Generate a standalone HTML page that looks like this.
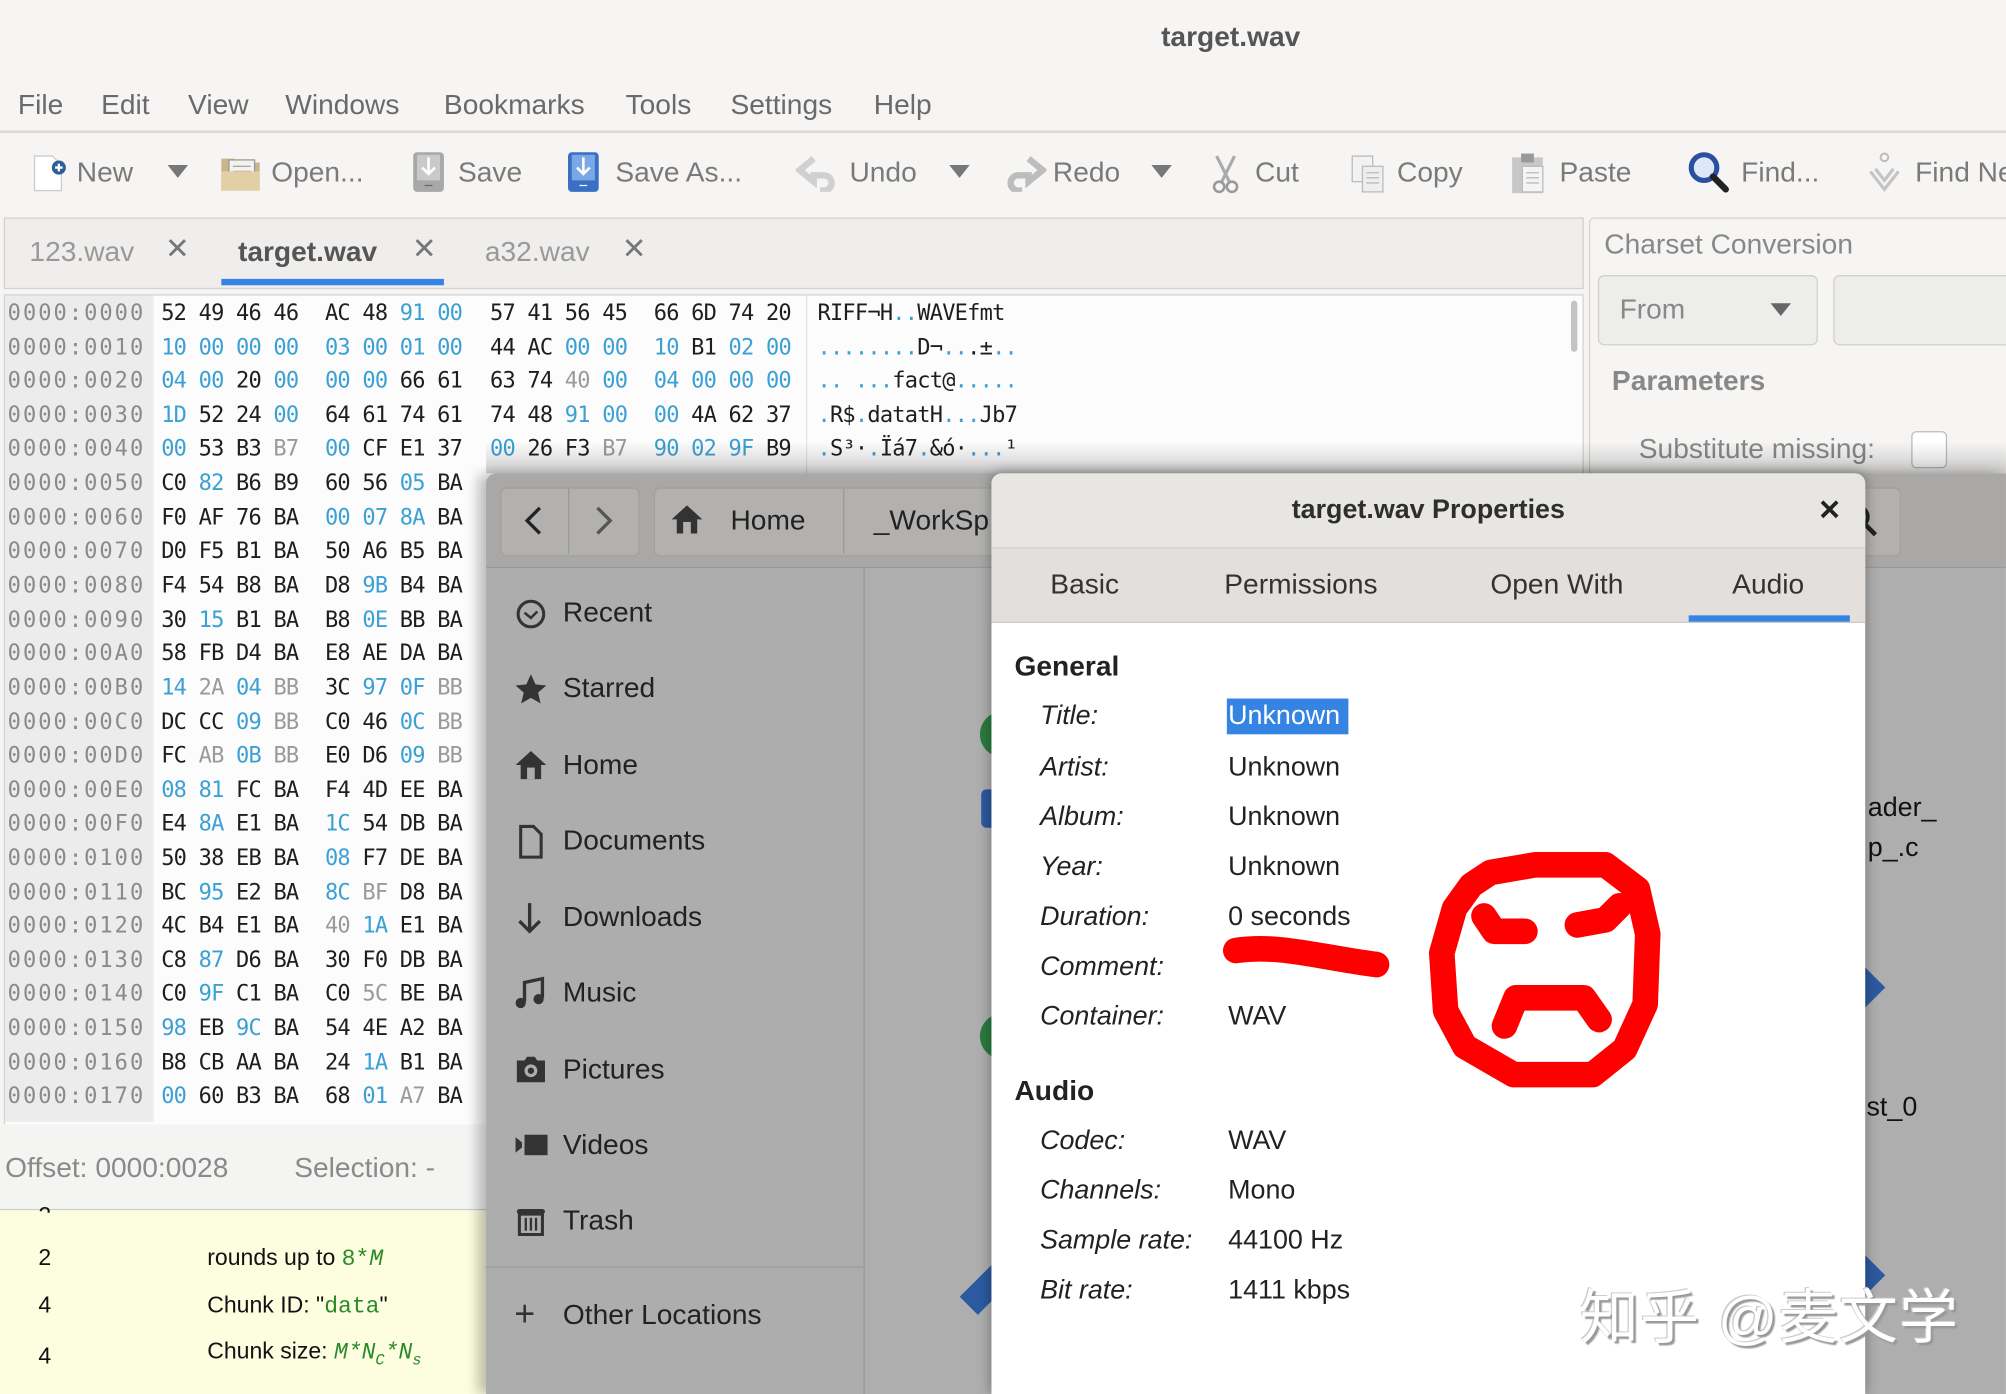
<!DOCTYPE html>
<html><head><meta charset="utf-8">
<style>
html,body{margin:0;padding:0;width:2006px;height:1394px;overflow:hidden;background:#f6f5f4}
#w{position:absolute;left:0;top:0;width:1568px;height:1090px;transform:scale(1.2793);transform-origin:0 0;font-family:"Liberation Sans",sans-serif;overflow:hidden}
.a{position:absolute;white-space:nowrap}
.n{font-family:"Liberation Sans Narrow","Liberation Sans",sans-serif}
.mi{font-size:22px;color:#6a6a6a;top:69px}
.tb{font-size:22px;color:#7a7a7a;top:122px}
.r{position:absolute;left:0;height:26px;font-family:"DejaVu Sans Mono","Liberation Mono",monospace;font-size:17.2px;color:#1e1e1e;line-height:26px}
.r .o{position:absolute;left:6px;color:#8a8a8a;letter-spacing:1.6px}
.r .g{position:absolute;white-space:pre;letter-spacing:-0.6px}
.b{color:#3ba0d4}
.y{color:#9a9a9a}
.sb{font-size:22px;color:#222;left:440px}
.sbi{position:absolute;left:402px}
.lb{font-size:21px;color:#222;font-style:italic;left:813px}
.vl{font-size:21px;color:#222;left:960px}
</style></head><body><div id="w">

<div class="a n" style="left:0;width:1924px;text-align:center;top:16px;font-size:22px;font-weight:bold;color:#555">target.wav</div>
<div class="a n mi" style="left:14px">File</div>
<div class="a n mi" style="left:79px">Edit</div>
<div class="a n mi" style="left:147px">View</div>
<div class="a n mi" style="left:223px">Windows</div>
<div class="a n mi" style="left:347px">Bookmarks</div>
<div class="a n mi" style="left:489px">Tools</div>
<div class="a n mi" style="left:571px">Settings</div>
<div class="a n mi" style="left:683px">Help</div>
<div class="a" style="left:0;top:102px;width:1568px;height:2px;background:#dcdad7"></div>

<svg class="a" style="left:24px;top:119px" width="30" height="32"><path d="M3 3h14l7 7v20H3z" fill="#fff" stroke="#ccc"/><circle cx="22" cy="12" r="5.5" fill="#2e5d9a"/><path d="M22 9v6M19 12h6" stroke="#fff" stroke-width="1.8"/></svg>
<div class="a n tb" style="left:60px">New</div>
<div class="a" style="left:131px;top:129px;width:0;height:0;border-left:8px solid transparent;border-right:8px solid transparent;border-top:10px solid #777"></div>
<svg class="a" style="left:171px;top:118px" width="36" height="34"><path d="M2 6h10l3 3h17v22H2z" fill="#cbb48a"/><rect x="8" y="7" width="20" height="18" fill="#f4f2ee" stroke="#999"/><path d="M11 12h14M11 16h14M11 20h10" stroke="#aaa"/><path d="M2 16h30v15H2z" fill="#e2cfa6"/></svg>
<div class="a n tb" style="left:212px">Open...</div>
<svg class="a" style="left:321px;top:117px" width="28" height="35"><rect x="2" y="2" width="24" height="31" rx="3" fill="#a8a8a8"/><rect x="5" y="4" width="18" height="20" fill="#c9c9c9"/><path d="M14 6v13M9 14l5 5 5-5" stroke="#fff" stroke-width="2" fill="none"/><path d="M11 28h6" stroke="#666"/></svg>
<div class="a n tb" style="left:358px">Save</div>
<svg class="a" style="left:442px;top:117px" width="28" height="35"><rect x="2" y="2" width="24" height="31" rx="3" fill="#3a6fc4"/><rect x="5" y="4" width="18" height="20" fill="#7aa7e6"/><path d="M14 6v13M9 14l5 5 5-5" stroke="#fff" stroke-width="2" fill="none"/><path d="M11 28h6" stroke="#fff"/></svg>
<div class="a n tb" style="left:481px">Save As...</div>
<svg class="a" style="left:622px;top:120px" width="36" height="30"><path d="M14 4L3 13l11 9v-5h8a6 6 0 0 1 0 12h-3" stroke="#d0d0d0" stroke-width="5" fill="none"/></svg>
<div class="a n tb" style="left:664px">Undo</div>
<div class="a" style="left:742px;top:129px;border-left:8px solid transparent;border-right:8px solid transparent;border-top:10px solid #777"></div>
<svg class="a" style="left:782px;top:120px" width="36" height="30"><path d="M22 4l11 9-11 9v-5h-8a6 6 0 0 0 0 12h3" stroke="#bdbdbd" stroke-width="5" fill="none"/></svg>
<div class="a n tb" style="left:823px">Redo</div>
<div class="a" style="left:900px;top:129px;border-left:8px solid transparent;border-right:8px solid transparent;border-top:10px solid #777"></div>
<svg class="a" style="left:945px;top:120px" width="26" height="32"><path d="M6 2l10 20M20 2L10 22" stroke="#aaa" stroke-width="2.5"/><circle cx="8" cy="26" r="4" fill="none" stroke="#999" stroke-width="2"/><circle cx="18" cy="26" r="4" fill="none" stroke="#999" stroke-width="2"/></svg>
<div class="a n tb" style="left:981px">Cut</div>
<svg class="a" style="left:1055px;top:120px" width="30" height="32"><rect x="2" y="2" width="16" height="20" fill="#f2f2f2" stroke="#bbb"/><rect x="10" y="10" width="16" height="20" fill="#eee" stroke="#bbb"/><path d="M13 15h10M13 19h10M13 23h10" stroke="#bbb"/></svg>
<div class="a n tb" style="left:1092px">Copy</div>
<svg class="a" style="left:1180px;top:118px" width="30" height="34"><rect x="2" y="5" width="24" height="28" fill="#c8c8c8"/><rect x="9" y="2" width="10" height="7" fill="#999"/><rect x="10" y="12" width="16" height="20" fill="#f4f4f4" stroke="#bbb"/><path d="M13 17h10M13 21h10M13 25h10" stroke="#bbb"/></svg>
<div class="a n tb" style="left:1219px">Paste</div>
<svg class="a" style="left:1318px;top:117px" width="36" height="36"><circle cx="14" cy="14" r="10" fill="#dde8f7" stroke="#2a4ea0" stroke-width="4"/><path d="M21 21l10 10" stroke="#222" stroke-width="5" stroke-linecap="round"/></svg>
<div class="a n tb" style="left:1361px">Find...</div>
<svg class="a" style="left:1458px;top:118px" width="32" height="34"><circle cx="15" cy="5" r="3" fill="none" stroke="#bbb" stroke-width="1.5"/><path d="M4 16l11 14 11-14M8 14l7 9 7-9" stroke="#c4c4c4" stroke-width="2.5" fill="none"/></svg>
<div class="a n tb" style="left:1497px">Find Ne</div>

<div class="a" style="left:3px;top:170px;width:1233px;height:54px;background:#efeeed;border:1px solid #d4d2cf"></div>
<div class="a n" style="left:23px;top:184px;font-size:22px;color:#999">123.wav</div>
<div class="a" style="left:129px;top:181px;font-size:23px;color:#777">✕</div>
<div class="a n" style="left:186px;top:184px;font-size:22px;color:#555;font-weight:bold">target.wav</div>
<div class="a" style="left:322px;top:181px;font-size:23px;color:#777">✕</div>
<div class="a" style="left:173px;top:218px;width:174px;height:5px;background:#3584e4"></div>
<div class="a n" style="left:379px;top:184px;font-size:22px;color:#999">a32.wav</div>
<div class="a" style="left:486px;top:181px;font-size:23px;color:#777">✕</div>

<div class="a" style="left:3px;top:230px;width:1233px;height:648px;background:#fcfcfc;border:1px solid #d4d2cf"></div>
<div class="a" style="left:4px;top:231px;width:116px;height:646px;background:#ececec"></div>
<div class="a" style="left:630px;top:231px;width:1px;height:646px;background:#e5e5e5"></div>
<div class="a" style="left:1228px;top:235px;width:5px;height:40px;background:#c4c4c4;border-radius:3px"></div>

<div class="r" style="top:232px"><span class="o">0000:0000</span><span class="g" style="left:126px">52 49 46 46</span><span class="g" style="left:254px">AC 48 <span class="b">91 00</span></span><span class="g" style="left:383px">57 41 56 45</span><span class="g" style="left:511px">66 6D 74 20</span><span class="g" style="left:639px">RIFF¬H<span class="b">..</span>WAVEfmt</span></div>
<div class="r" style="top:259px"><span class="o">0000:0010</span><span class="g b" style="left:126px">10 00 00 00</span><span class="g b" style="left:254px">03 00 01 00</span><span class="g" style="left:383px">44 AC <span class="b">00 00</span></span><span class="g" style="left:511px"><span class="b">10</span> B1 <span class="b">02 00</span></span><span class="g" style="left:639px"><span class="b">........</span>D¬<span class="b">..</span>.±<span class="b">..</span></span></div>
<div class="r" style="top:285px"><span class="o">0000:0020</span><span class="g" style="left:126px"><span class="b">04 00</span> 20 <span class="b">00</span></span><span class="g" style="left:254px"><span class="b">00 00</span> 66 61</span><span class="g" style="left:383px">63 74 <span class="y">40</span> <span class="b">00</span></span><span class="g b" style="left:511px">04 00 00 00</span><span class="g" style="left:639px"><span class="b">..</span> <span class="b">...</span>fact@<span class="b">.....</span></span></div>
<div class="r" style="top:312px"><span class="o">0000:0030</span><span class="g" style="left:126px"><span class="b">1D</span> 52 24 <span class="b">00</span></span><span class="g" style="left:254px">64 61 74 61</span><span class="g" style="left:383px">74 48 <span class="b">91 00</span></span><span class="g" style="left:511px"><span class="b">00</span> 4A 62 37</span><span class="g" style="left:639px"><span class="b">.</span>R$<span class="b">.</span>datatH<span class="b">...</span>Jb7</span></div>
<div class="r" style="top:338px"><span class="o">0000:0040</span><span class="g" style="left:126px"><span class="b">00</span> 53 B3 <span class="y">B7</span></span><span class="g" style="left:254px"><span class="b">00</span> CF E1 37</span><span class="g" style="left:383px"><span class="b">00</span> 26 F3 <span class="y">B7</span></span><span class="g" style="left:511px"><span class="b">90 02 9F</span> B9</span><span class="g" style="left:639px"><span class="b">.</span>S³·<span class="b">.</span>Ïá7<span class="b">.</span>&amp;ó·<span class="b">...</span>¹</span></div>
<div class="r" style="top:365px"><span class="o">0000:0050</span><span class="g" style="left:126px">C0 <span class="b">82</span> B6 B9</span><span class="g" style="left:254px">60 56 <span class="b">05</span> BA</span></div>
<div class="r" style="top:392px"><span class="o">0000:0060</span><span class="g" style="left:126px">F0 AF 76 BA</span><span class="g" style="left:254px"><span class="b">00 07 8A</span> BA</span></div>
<div class="r" style="top:418px"><span class="o">0000:0070</span><span class="g" style="left:126px">D0 F5 B1 BA</span><span class="g" style="left:254px">50 A6 B5 BA</span></div>
<div class="r" style="top:445px"><span class="o">0000:0080</span><span class="g" style="left:126px">F4 54 B8 BA</span><span class="g" style="left:254px">D8 <span class="b">9B</span> B4 BA</span></div>
<div class="r" style="top:472px"><span class="o">0000:0090</span><span class="g" style="left:126px">30 <span class="b">15</span> B1 BA</span><span class="g" style="left:254px">B8 <span class="b">0E</span> BB BA</span></div>
<div class="r" style="top:498px"><span class="o">0000:00A0</span><span class="g" style="left:126px">58 FB D4 BA</span><span class="g" style="left:254px">E8 AE DA BA</span></div>
<div class="r" style="top:525px"><span class="o">0000:00B0</span><span class="g" style="left:126px"><span class="b">14</span> <span class="y">2A</span> <span class="b">04</span> <span class="y">BB</span></span><span class="g" style="left:254px">3C <span class="b">97 0F</span> <span class="y">BB</span></span></div>
<div class="r" style="top:552px"><span class="o">0000:00C0</span><span class="g" style="left:126px">DC CC <span class="b">09</span> <span class="y">BB</span></span><span class="g" style="left:254px">C0 46 <span class="b">0C</span> <span class="y">BB</span></span></div>
<div class="r" style="top:578px"><span class="o">0000:00D0</span><span class="g" style="left:126px">FC <span class="y">AB</span> <span class="b">0B</span> <span class="y">BB</span></span><span class="g" style="left:254px">E0 D6 <span class="b">09</span> <span class="y">BB</span></span></div>
<div class="r" style="top:605px"><span class="o">0000:00E0</span><span class="g" style="left:126px"><span class="b">08 81</span> FC BA</span><span class="g" style="left:254px">F4 4D EE BA</span></div>
<div class="r" style="top:631px"><span class="o">0000:00F0</span><span class="g" style="left:126px">E4 <span class="b">8A</span> E1 BA</span><span class="g" style="left:254px"><span class="b">1C</span> 54 DB BA</span></div>
<div class="r" style="top:658px"><span class="o">0000:0100</span><span class="g" style="left:126px">50 38 EB BA</span><span class="g" style="left:254px"><span class="b">08</span> F7 DE BA</span></div>
<div class="r" style="top:685px"><span class="o">0000:0110</span><span class="g" style="left:126px">BC <span class="b">95</span> E2 BA</span><span class="g" style="left:254px"><span class="b">8C</span> <span class="y">BF</span> D8 BA</span></div>
<div class="r" style="top:711px"><span class="o">0000:0120</span><span class="g" style="left:126px">4C B4 E1 BA</span><span class="g" style="left:254px"><span class="y">40</span> <span class="b">1A</span> E1 BA</span></div>
<div class="r" style="top:738px"><span class="o">0000:0130</span><span class="g" style="left:126px">C8 <span class="b">87</span> D6 BA</span><span class="g" style="left:254px">30 F0 DB BA</span></div>
<div class="r" style="top:764px"><span class="o">0000:0140</span><span class="g" style="left:126px">C0 <span class="b">9F</span> C1 BA</span><span class="g" style="left:254px">C0 <span class="y">5C</span> BE BA</span></div>
<div class="r" style="top:791px"><span class="o">0000:0150</span><span class="g" style="left:126px"><span class="b">98</span> EB <span class="b">9C</span> BA</span><span class="g" style="left:254px">54 4E A2 BA</span></div>
<div class="r" style="top:818px"><span class="o">0000:0160</span><span class="g" style="left:126px">B8 CB AA BA</span><span class="g" style="left:254px">24 <span class="b">1A</span> B1 BA</span></div>
<div class="r" style="top:844px"><span class="o">0000:0170</span><span class="g" style="left:126px"><span class="b">00</span> 60 B3 BA</span><span class="g" style="left:254px">68 <span class="b">01</span> <span class="y">A7</span> BA</span></div>

<div class="a" style="left:0;top:879px;width:380px;height:66px;background:#f4f4f3;border-bottom:1px solid #ccc"></div>
<div class="a" style="left:4px;top:900px;font-size:22px;color:#8a8a8a">Offset: 0000:0028</div>
<div class="a" style="left:230px;top:900px;font-size:22px;color:#8a8a8a">Selection: -</div>

<div class="a" style="left:0;top:946px;width:380px;height:144px;background:#fdfde0"></div>
<div class="a" style="left:30px;top:940px;font-size:18px;color:#111;height:8px;overflow:hidden">2</div>
<div class="a" style="left:30px;top:973px;font-size:18px;color:#111">2</div>
<div class="a" style="left:30px;top:1010px;font-size:18px;color:#111">4</div>
<div class="a" style="left:30px;top:1050px;font-size:18px;color:#111">4</div>
<div class="a" style="left:162px;top:973px;font-size:18px;color:#111">rounds up to <span style="font-family:'Liberation Mono',monospace;color:#2a8a2a">8*<i>M</i></span></div>
<div class="a" style="left:162px;top:1010px;font-size:18px;color:#111">Chunk ID: "<span style="font-family:'Liberation Mono',monospace;color:#2a8a2a">data</span>"</div>
<div class="a" style="left:162px;top:1046px;font-size:18px;color:#111">Chunk size: <span style="font-family:'Liberation Mono',monospace;color:#2a8a2a;font-style:italic">M*N<sub style="font-size:12px">C</sub>*N<sub style="font-size:12px">s</sub></span></div>

<div class="a" style="left:1242px;top:170px;width:340px;height:200px;background:#f6f5f4;border:1px solid #d4d2cf;border-radius:4px"></div>
<div class="a n" style="left:1254px;top:178px;font-size:22px;color:#888">Charset Conversion</div>
<div class="a" style="left:1249px;top:215px;width:170px;height:53px;background:#ededec;border:1px solid #d2d0cd;border-radius:5px"></div>
<div class="a n" style="left:1266px;top:229px;font-size:22px;color:#888">From</div>
<div class="a" style="left:1384px;top:237px;border-left:8px solid transparent;border-right:8px solid transparent;border-top:10px solid #666"></div>
<div class="a" style="left:1433px;top:215px;width:160px;height:53px;background:#ededec;border:1px solid #d2d0cd;border-radius:5px"></div>
<div class="a n" style="left:1260px;top:285px;font-size:22px;color:#888;font-weight:bold">Parameters</div>
<div class="a n" style="left:1281px;top:338px;font-size:22px;color:#888">Substitute missing:</div>
<div class="a" style="left:1494px;top:337px;width:26px;height:27px;background:#fff;border:1px solid #bbb;border-radius:4px"></div>

<div class="a" style="left:380px;top:345px;width:1188px;height:25px;background:linear-gradient(rgba(0,0,0,0),rgba(0,0,0,.18))"></div>

<div class="a" style="left:380px;top:370px;width:1188px;height:720px;background:#aeaeae;border-radius:8px 0 0 0;box-shadow:-6px 0 10px rgba(0,0,0,.25)"></div>
<div class="a" style="left:380px;top:370px;width:1188px;height:73px;background:#a9a8a6;border-radius:8px 0 0 0;border-bottom:1px solid #999"></div>
<div class="a" style="left:391px;top:381px;width:107px;height:52px;background:#b2b1af;border:1px solid #a0a09e;border-radius:5px"></div>
<div class="a" style="left:444px;top:382px;width:1px;height:51px;background:#999"></div>
<svg class="a" style="left:405px;top:393px" width="24" height="28"><path d="M17 4L7 14l10 10" stroke="#222" stroke-width="2.6" fill="none"/></svg>
<svg class="a" style="left:460px;top:393px" width="24" height="28"><path d="M7 4l10 10-10 10" stroke="#555" stroke-width="2.6" fill="none"/></svg>
<div class="a" style="left:511px;top:381px;width:290px;height:52px;background:#b2b1af;border:1px solid #a0a09e;border-radius:5px"></div>
<div class="a" style="left:659px;top:382px;width:1px;height:51px;background:#999"></div>
<svg class="a" style="left:523px;top:393px" width="28" height="26"><path d="M2 13L14 2l12 11h-4v11H6V13z" fill="#333"/><rect x="11" y="15" width="6" height="9" fill="#b2b1af"/></svg>
<div class="a" style="left:571px;top:394px;font-size:22px;color:#222">Home</div>
<div class="a" style="left:683px;top:394px;font-size:22px;color:#222">_WorkSp</div>
<div class="a" style="left:1420px;top:381px;width:64px;height:52px;background:#b2b1af;border:1px solid #a0a09e;border-radius:5px"></div>
<svg class="a" style="left:1440px;top:392px" width="34" height="32"><circle cx="12" cy="12" r="8" stroke="#222" stroke-width="3" fill="none"/><path d="M18 18l8 8" stroke="#222" stroke-width="3.5"/></svg>
<div class="a" style="left:380px;top:444px;width:295px;height:646px;background:#adadad;border-right:1px solid #9a9a9a"></div>
<div class="a" style="left:380px;top:990px;width:295px;height:1px;background:#9a9a9a"></div>

<svg class="sbi" style="top:467px" width="26" height="26"><circle cx="13" cy="13" r="10" stroke="#333" stroke-width="2.4" fill="none"/><path d="M8 12l5 4 5-5" stroke="#333" stroke-width="2" fill="none"/></svg>
<div class="a sb" style="top:466px">Recent</div>
<svg class="sbi" style="top:526px" width="26" height="26"><path d="M13 1l3.6 8 8.4.8-6.4 5.6 2 8.4L13 19.5 5.4 23.8l2-8.4L1 9.8l8.4-.8z" fill="#333"/></svg>
<div class="a sb" style="top:525px">Starred</div>
<svg class="sbi" style="top:586px" width="26" height="24"><path d="M1 12L13 1l12 11h-4v11H5V12z" fill="#333"/><rect x="10" y="14" width="6" height="9" fill="#adadad"/></svg>
<div class="a sb" style="top:585px">Home</div>
<svg class="sbi" style="top:644px" width="26" height="28"><path d="M5 2h10l6 6v18H5z" stroke="#333" stroke-width="2.4" fill="none"/></svg>
<div class="a sb" style="top:644px">Documents</div>
<svg class="sbi" style="top:704px" width="26" height="28"><path d="M12 2v22M4 16l8 8 8-8" stroke="#333" stroke-width="2.6" fill="none"/></svg>
<div class="a sb" style="top:704px">Downloads</div>
<svg class="sbi" style="top:763px" width="26" height="28"><path d="M8 20V5l14-3v15" stroke="#333" stroke-width="2.6" fill="none"/><circle cx="5" cy="21" r="4" fill="#333"/><circle cx="19" cy="18" r="4" fill="#333"/></svg>
<div class="a sb" style="top:763px">Music</div>
<svg class="sbi" style="top:824px" width="26" height="24"><path d="M2 5h6l2-3h6l2 3h6v17H2z" fill="#333"/><circle cx="13" cy="13" r="5" fill="#adadad"/><circle cx="13" cy="13" r="2.5" fill="#333"/></svg>
<div class="a sb" style="top:823px">Pictures</div>
<svg class="sbi" style="top:884px" width="28" height="22"><path d="M1 5l5 4v4l-5 4z" fill="#333"/><rect x="8" y="3" width="18" height="16" fill="#333"/></svg>
<div class="a sb" style="top:882px">Videos</div>
<svg class="sbi" style="top:941px" width="26" height="28"><rect x="2" y="4" width="22" height="4" rx="2" fill="#333"/><path d="M4 8h18v16H4z" stroke="#333" stroke-width="2.4" fill="none"/><path d="M9 11v10M13 11v10M17 11v10" stroke="#333" stroke-width="1.8"/></svg>
<div class="a sb" style="top:941px">Trash</div>
<div class="a" style="left:402px;top:1011px;font-size:28px;color:#333">+</div>
<div class="a sb" style="top:1015px">Other Locations</div>

<div class="a" style="left:766px;top:556px;width:20px;height:36px;background:#2a7a3e;border-radius:18px 0 0 18px"></div>
<div class="a" style="left:767px;top:617px;width:12px;height:30px;background:#2c5aa0;border-radius:4px"></div>
<div class="a" style="left:766px;top:792px;width:20px;height:36px;background:#2a7a3e;border-radius:18px 0 0 18px"></div>
<div class="a" style="left:760px;top:990px;width:20px;height:36px;background:#2c5aa0;transform:rotate(45deg)"></div>
<div class="a" style="left:1445px;top:760px;width:22px;height:28px;background:#2c5aa0;transform:rotate(45deg)"></div>
<div class="a" style="left:1445px;top:985px;width:22px;height:28px;background:#2c5aa0;transform:rotate(45deg)"></div>
<div class="a" style="left:1460px;top:620px;font-size:21px;color:#111">ader_</div>
<div class="a" style="left:1460px;top:651px;font-size:21px;color:#111">p_.c</div>
<div class="a" style="left:1459px;top:854px;font-size:21px;color:#111">st_0</div>

<div class="a" style="left:775px;top:370px;width:683px;height:720px;background:#fff;border-radius:8px 8px 0 0;box-shadow:0 0 10px rgba(0,0,0,.35)"></div>
<div class="a" style="left:775px;top:370px;width:683px;height:58px;background:#e8e6e3;border-radius:8px 8px 0 0;border-bottom:1px solid #cfcdca"></div>
<div class="a" style="left:775px;top:387px;width:683px;text-align:center;font-size:21px;font-weight:bold;color:#2e2e2e">target.wav Properties</div>
<div class="a" style="left:1421px;top:386px;font-size:22px;font-weight:bold;color:#222">✕</div>
<div class="a" style="left:775px;top:429px;width:683px;height:57px;background:#e2dfdc;border-bottom:1px solid #cfcdca"></div>
<div class="a" style="left:821px;top:444px;font-size:22px;color:#333">Basic</div>
<div class="a" style="left:957px;top:444px;font-size:22px;color:#333">Permissions</div>
<div class="a" style="left:1165px;top:444px;font-size:22px;color:#333">Open With</div>
<div class="a" style="left:1354px;top:444px;font-size:22px;color:#333">Audio</div>
<div class="a" style="left:1320px;top:481px;width:126px;height:5px;background:#3584e4"></div>

<div class="a" style="left:793px;top:508px;font-size:22px;font-weight:bold;color:#222">General</div>
<div class="a lb" style="top:548px">Title:</div>
<div class="a" style="left:959px;top:546px;width:95px;height:28px;background:#3584e4"></div>
<div class="a vl" style="top:548px;color:#fff">Unknown</div>
<div class="a lb" style="top:588px">Artist:</div><div class="a vl" style="top:588px">Unknown</div>
<div class="a lb" style="top:627px">Album:</div><div class="a vl" style="top:627px">Unknown</div>
<div class="a lb" style="top:666px">Year:</div><div class="a vl" style="top:666px">Unknown</div>
<div class="a lb" style="top:705px">Duration:</div><div class="a vl" style="top:705px">0 seconds</div>
<div class="a lb" style="top:744px">Comment:</div>
<div class="a lb" style="top:783px">Container:</div><div class="a vl" style="top:783px">WAV</div>
<div class="a" style="left:793px;top:840px;font-size:22px;font-weight:bold;color:#222">Audio</div>
<div class="a lb" style="top:880px">Codec:</div><div class="a vl" style="top:880px">WAV</div>
<div class="a lb" style="top:919px">Channels:</div><div class="a vl" style="top:919px">Mono</div>
<div class="a lb" style="top:958px">Sample rate:</div><div class="a vl" style="top:958px">44100 Hz</div>
<div class="a lb" style="top:997px">Bit rate:</div><div class="a vl" style="top:997px">1411 kbps</div>

<svg class="a" style="left:0;top:0" width="1568" height="1090">
<g stroke="#f00" stroke-width="20" fill="none" stroke-linecap="round" stroke-linejoin="round">
<path d="M966 743C1000 738 1030 748 1076 754"/>
<path d="M1165 682L1200 676 1255 676 1280 695 1288 730 1286 785 1270 820 1245 840 1183 840 1145 818 1130 790 1127 745 1137 710 1150 692z"/>
<path d="M1160 716L1168 728 1192 728"/>
<path d="M1233 723L1255 719 1266 708"/>
<path d="M1176 802L1185 780 1238 780 1250 797"/>
</g></svg>

<div class="a" style="left:1235px;top:994px;font-family:'Liberation Sans','Noto Sans CJK SC',sans-serif;font-size:46px;color:#fff;text-shadow:2px 2px 1px #999,-1px -1px 0 #ccc;letter-spacing:1px">知乎 @麦文学</div>

</div></body></html>
